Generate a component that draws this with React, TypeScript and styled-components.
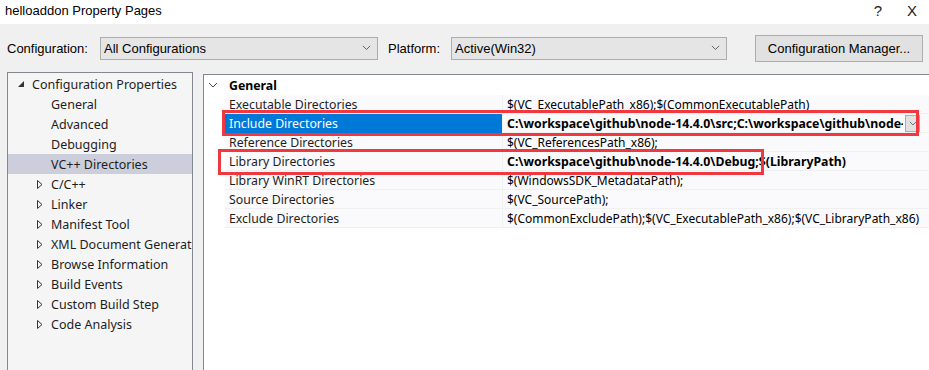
import React from 'react';
import styled, { createGlobalStyle } from 'styled-components';

const GlobalStyle = createGlobalStyle`
  html, body {
    margin: 0;
    padding: 0;
    background: #f0f0f0;
  }
  body {
    font-family: "Noto Sans", "Liberation Sans", sans-serif;
    font-size: 12.5px;
    color: #1e1e1e;
  }
`;

const Window = styled.div`
  width: 929px;
  height: 370px;
  overflow: hidden;
  background: #f0f0f0;
`;

const TitleBar = styled.div`
  height: 24px;
  background: #ffffff;
  display: flex;
  align-items: center;
  padding: 0 0 0 5px;
  font-family: "Liberation Sans", sans-serif;
  font-size: 13px;
  color: #000;
`;

const Title = styled.div`
  flex: 1;
  padding-bottom: 4px;
`;

const TitleButton = styled.div`
  width: 34px;
  text-align: center;
  font-size: 15px;
  font-weight: 300;
  color: #222;
  padding-bottom: 4px;
`;

const Toolbar = styled.div`
  height: 48px;
  display: flex;
  align-items: center;
  padding: 0 6px 0 7px;
  font-family: "Liberation Sans", sans-serif;
  font-size: 13px;
  color: #000;
`;

const Label = styled.span<{ $w: number; $gap?: number }>`
  width: ${p => p.$w}px;
  margin-left: ${p => p.$gap || 0}px;
  flex: none;
  white-space: nowrap;
`;

const Combo = styled.div<{ $w: number }>`
  width: ${p => p.$w}px;
  height: 23px;
  box-sizing: border-box;
  flex: none;
  background: #e5e5e5;
  border: 1px solid #adadad;
  display: flex;
  align-items: center;
  padding: 0 6px 0 3px;
`;

const ComboText = styled.span`
  flex: 1;
`;

const Chevron = ({ size = 9, color = '#555' }: { size?: number; color?: string }) => (
  <svg width={size} height={size * 0.6} viewBox="0 0 10 6">
    <path d="M1 1 L5 5 L9 1" fill="none" stroke={color} strokeWidth="1" />
  </svg>
);

const Button = styled.div`
  margin-left: auto;
  width: 168px;
  height: 27px;
  box-sizing: border-box;
  background: #e1e1e1;
  border: 1px solid #adadad;
  display: flex;
  align-items: center;
  justify-content: center;
`;

const Main = styled.div`
  display: flex;
  gap: 10px;
  padding-left: 7px;
`;

const TreePanel = styled.div`
  width: 186px;
  height: 320px;
  box-sizing: border-box;
  background: #f5f5f5;
  border: 1px solid #828790;
  padding-top: 1px;
  flex: none;
`;

const TreeRow = styled.div<{ $indent: number; $selected?: boolean }>`
  height: 20px;
  display: flex;
  align-items: center;
  padding-left: ${p => p.$indent}px;
  background: ${p => (p.$selected ? '#cccedb' : 'transparent')};
  white-space: nowrap;
  overflow: hidden;
`;

const Twisty = styled.span`
  width: 14px;
  display: inline-flex;
  align-items: center;
  flex: none;
`;

const GridPanel = styled.div`
  flex: 1;
  min-width: 0;
  overflow: hidden;
  height: 320px;
  margin-top: 2px;
  background: #ffffff;
  border-top: 1px solid #828790;
  border-left: 1px solid #828790;
  font-size: 12.3px;
`;

const GroupHeader = styled.div`
  height: 20px;
  display: flex;
  align-items: center;
  font-weight: 700;
  color: #000;
`;

const GroupTwisty = styled.span`
  width: 25px;
  padding-left: 4px;
  box-sizing: border-box;
  display: inline-flex;
`;

const Rows = styled.div`
  position: relative;
  margin-left: 21px;
`;

const Row = styled.div`
  height: 19px;
  display: flex;
  background: #fafafc;
  box-shadow: inset 0 -1px 0 #f0f0f0;
`;

const NameCell = styled.div<{ $selected?: boolean }>`
  width: 278px;
  flex: none;
  padding-left: 4px;
  box-sizing: border-box;
  display: flex;
  align-items: center;
  background: ${p => (p.$selected ? '#0078d7' : 'transparent')};
  color: ${p => (p.$selected ? '#ffffff' : '#1e1e1e')};
  border-right: 1px solid #f0f0f0;
  white-space: nowrap;
`;

const ValueCell = styled.div<{ $bold?: boolean }>`
  flex: 1;
  min-width: 0;
  padding-left: 4px;
  display: flex;
  align-items: center;
  font-size: ${p => (p.$bold ? 12.3 : 12)}px;
  font-weight: ${p => (p.$bold ? 700 : 400)};
  color: #000;
  white-space: nowrap;
  overflow: hidden;
`;

const ValueText = styled.span`
  overflow: hidden;
  flex: 1;
  min-width: 0;
`;

const DropButton = styled.div`
  width: 15px;
  height: 17px;
  box-sizing: border-box;
  margin: 0 9px 0 2px;
  flex: none;
  background: #e1e1e1;
  border: 1px solid #adadad;
  display: flex;
  align-items: center;
  justify-content: center;
`;

const Highlight = styled.div<{ $left: number; $top: number; $w: number }>`
  position: absolute;
  left: ${p => p.$left}px;
  top: ${p => p.$top}px;
  width: ${p => p.$w}px;
  height: 26px;
  box-sizing: border-box;
  border: 3px solid #f0383e;
  pointer-events: none;
`;

const Expanded = () => (
  <svg width="7" height="7" viewBox="0 0 7 7">
    <path d="M6 0 L6 6 L0 6 Z" fill="#333" />
  </svg>
);

const Collapsed = () => (
  <svg width="6" height="9" viewBox="0 0 6 9">
    <path d="M0.5 0.5 L5 4.5 L0.5 8.5 Z" fill="none" stroke="#333" strokeWidth="1" />
  </svg>
);

const leaves = ['General', 'Advanced', 'Debugging', 'VC++ Directories'];
const groups = [
  'C/C++',
  'Linker',
  'Manifest Tool',
  'XML Document Generator',
  'Browse Information',
  'Build Events',
  'Custom Build Step',
  'Code Analysis',
];

const props = [
  { name: 'Executable Directories', value: '$(VC_ExecutablePath_x86);$(CommonExecutablePath)' },
  {
    name: 'Include Directories',
    value: 'C:\\workspace\\github\\node-14.4.0\\src;C:\\workspace\\github\\node-14.4.0\\deps\\v8\\include;$(IncludePath)',
    bold: true,
    selected: true,
  },
  { name: 'Reference Directories', value: '$(VC_ReferencesPath_x86);' },
  { name: 'Library Directories', value: 'C:\\workspace\\github\\node-14.4.0\\Debug;$(LibraryPath)', bold: true },
  { name: 'Library WinRT Directories', value: '$(WindowsSDK_MetadataPath);' },
  { name: 'Source Directories', value: '$(VC_SourcePath);' },
  {
    name: 'Exclude Directories',
    value: '$(CommonExcludePath);$(VC_ExecutablePath_x86);$(VC_LibraryPath_x86)',
  },
];

export default function App() {
  return (
    <Window>
      <GlobalStyle />
      <TitleBar>
        <Title>helloaddon Property Pages</Title>
        <TitleButton>?</TitleButton>
        <TitleButton>X</TitleButton>
      </TitleBar>
      <Toolbar>
        <Label $w={93}>Configuration:</Label>
        <Combo $w={278}>
          <ComboText>All Configurations</ComboText>
          <Chevron />
        </Combo>
        <Label $w={63} $gap={10}>Platform:</Label>
        <Combo $w={276}>
          <ComboText>Active(Win32)</ComboText>
          <Chevron />
        </Combo>
        <Button>Configuration Manager...</Button>
      </Toolbar>
      <Main>
        <TreePanel>
          <TreeRow $indent={10}>
            <Twisty>
              <Expanded />
            </Twisty>
            Configuration Properties
          </TreeRow>
          {leaves.map(l => (
            <TreeRow key={l} $indent={43} $selected={l === 'VC++ Directories'}>
              {l}
            </TreeRow>
          ))}
          {groups.map(g => (
            <TreeRow key={g} $indent={29}>
              <Twisty>
                <Collapsed />
              </Twisty>
              {g}
            </TreeRow>
          ))}
        </TreePanel>
        <GridPanel>
          <GroupHeader>
            <GroupTwisty>
              <Chevron size={10} color="#444" />
            </GroupTwisty>
            General
          </GroupHeader>
          <Rows>
            {props.map(p => (
              <Row key={p.name}>
                <NameCell $selected={p.selected}>{p.name}</NameCell>
                <ValueCell $bold={p.bold}>
                  <ValueText>{p.value}</ValueText>
                  {p.selected && (
                    <DropButton>
                      <Chevron size={8} />
                    </DropButton>
                  )}
                </ValueCell>
              </Row>
            ))}
            <Highlight $left={-3} $top={15} $w={697} />
            <Highlight $left={-7} $top={54} $w={546} />
          </Rows>
        </GridPanel>
      </Main>
    </Window>
  );
}
